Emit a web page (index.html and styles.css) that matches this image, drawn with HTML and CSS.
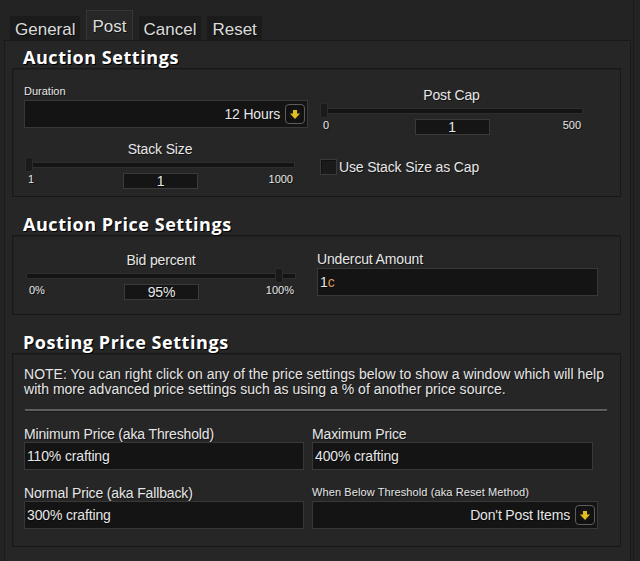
FILE: index.html
```html
<!DOCTYPE html>
<html>
<head>
<meta charset="utf-8">
<link rel="stylesheet" href="styles.css">
</head>
<body>
<div class="window">
  <div class="tabs">
    <div class="tab">General</div>
    <div class="tab active">Post</div>
    <div class="tab">Cancel</div>
    <div class="tab">Reset</div>
  </div>
  <div class="panel">
    <h2 class="heading">Auction Settings</h2>
    <div class="box box-auction">
      <div class="field">
        <div class="label small">Duration</div>
        <div class="dropdown">
          <span class="dd-text">12 Hours</span>
          <span class="dd-btn"><svg width="10" height="9" viewBox="0 0 10 9"><path d="M3 0h4v3.5h3L5 9 0 3.5h3z" fill="#e0c01c"/></svg></span>
        </div>
      </div>
      <div class="slider postcap">
        <div class="slider-label">Post Cap</div>
        <div class="slider-track-wrap"><div class="slider-track"></div><div class="slider-thumb" style="left: calc((100% - 8px) * 0)"></div></div>
        <div class="slider-foot"><span class="slider-min">0</span><span class="slider-value">1</span><span class="slider-max">500</span></div>
      </div>
      <div class="slider stack">
        <div class="slider-label">Stack Size</div>
        <div class="slider-track-wrap"><div class="slider-track"></div><div class="slider-thumb" style="left: calc((100% - 8px) * 0)"></div></div>
        <div class="slider-foot"><span class="slider-min">1</span><span class="slider-value">1</span><span class="slider-max">1000</span></div>
      </div>
      <div class="check">
        <span class="checkbox"></span><span class="check-text">Use Stack Size as Cap</span>
      </div>
    </div>

    <h2 class="heading spaced">Auction Price Settings</h2>
    <div class="box box-price">
      <div class="slider bid">
        <div class="slider-label">Bid percent</div>
        <div class="slider-track-wrap"><div class="slider-track"></div><div class="slider-thumb" style="left: calc((100% - 8px) * 0.95)"></div></div>
        <div class="slider-foot"><span class="slider-min">0%</span><span class="slider-value">95%</span><span class="slider-max">100%</span></div>
      </div>
      <div class="field">
        <div class="label">Undercut Amount</div>
        <div class="input"><span>1</span><span class="copper">c</span></div>
      </div>
    </div>

    <h2 class="heading spaced">Posting Price Settings</h2>
    <div class="box box-posting">
      <p class="note">NOTE: You can right click on any of the price settings below to show a window which will help<br>with more advanced price settings such as using a % of another price source.</p>
      <div class="separator"></div>
      <div class="posting-grid">
        <div class="field">
          <div class="label">Minimum Price (aka Threshold)</div>
          <div class="input">110% crafting</div>
        </div>
        <div class="field">
          <div class="label">Maximum Price</div>
          <div class="input narrow">400% crafting</div>
        </div>
        <div class="field">
          <div class="label">Normal Price (aka Fallback)</div>
          <div class="input">300% crafting</div>
        </div>
        <div class="field">
          <div class="label tiny">When Below Threshold (aka Reset Method)</div>
          <div class="dropdown">
            <span class="dd-text">Don't Post Items</span>
            <span class="dd-btn"><svg width="10" height="9" viewBox="0 0 10 9"><path d="M3 0h4v3.5h3L5 9 0 3.5h3z" fill="#e0c01c"/></svg></span>
          </div>
        </div>
      </div>
    </div>
  </div>
</div>
</body>
</html>
```
FILE: styles.css
```css
html, body {
  margin: 0;
  padding: 0;
  background: #232323;
}
body {
  font-family: "Liberation Sans", Arial, sans-serif;
  color: #e6e6e6;
  font-size: 14px;
  letter-spacing: -0.15px;
  text-shadow: 1px 1px 0 rgba(0, 0, 0, 0.55);
}
.window {
  width: 634px;
  height: 561px;
  overflow: hidden;
  border-right: 1px solid #1a1a1a;
  box-sizing: border-box;
}
.tabs {
  display: flex;
  align-items: flex-end;
  gap: 6px;
  height: 40px;
  padding-left: 10px;
  box-sizing: border-box;
}
.tab {
  font-size: 17px;
  letter-spacing: 0;
  height: 24px;
  line-height: 20px;
  padding: 0 5px;
  display: flex;
  align-items: flex-end;
  background: #1b1b1b;
  color: #dcdcdc;
  box-sizing: border-box;
}
.tab.active {
  height: 30px;
  padding: 0 5px 3px;
  background: #272727;
  border: 1px solid #363636;
  border-bottom: none;
}
.panel {
  margin-left: 4px;
  width: 627px;
  height: 521px;
  box-sizing: border-box;
  border: 1px solid #1a1a1a;
  border-bottom: none;
  background: #262626;
  padding: 5px 9px 0 7px;
}
.heading {
  margin: 0 0 0 11px;
  font-family: "Open Sans", "DejaVu Sans", sans-serif;
  font-weight: 700;
  font-size: 18px;
  line-height: 22px;
  letter-spacing: 0.55px;
  color: #ffffff;
  text-shadow: 1px 1px 0 #000;
}
.heading.spaced {
  margin-top: 16px;
}
.box {
  border: 1px solid #181818;
  box-shadow: inset 1px 1px 0 #202020;
}
.box-auction {
  padding: 15px 0 7px 11px;
  display: grid;
  grid-template-columns: 284px 263px;
  column-gap: 12px;
  row-gap: 6px;
  align-items: start;
}
.box-price {
  padding: 16px 0 14px 12px;
  display: grid;
  grid-template-columns: 270px 281px;
  column-gap: 22px;
  align-items: start;
}
.box-posting {
  padding: 13px 13px 17px 11px;
}
.label {
  font-size: 14px;
  line-height: 15px;
  white-space: nowrap;
}
.label.small {
  font-size: 11px;
  letter-spacing: 0;
}
.label.tiny {
  font-size: 11px;
  line-height: 12px;
  letter-spacing: 0.1px;
  padding-bottom: 3px;
}
.dropdown {
  margin-top: 1px;
  height: 28px;
  box-sizing: border-box;
  background: #141414;
  border: 1px solid #383838;
  display: flex;
  justify-content: flex-end;
  align-items: center;
  padding-right: 2px;
}
.box-posting .dropdown {
  margin-top: 0;
}
.dd-text {
  font-size: 14px;
  margin-right: 5px;
}
.dd-btn {
  width: 20px;
  height: 20px;
  box-sizing: border-box;
  border: 1px solid #5c5c5c;
  border-radius: 4px;
  background: radial-gradient(circle, #1e1e1e 0%, #080808 100%);
  box-shadow: inset 0 0 0 1px #141414;
  display: flex;
  align-items: center;
  justify-content: center;
}
.slider {
  display: flex;
  flex-direction: column;
}
.postcap {
  margin-top: 3px;
}
.stack, .bid {
  margin-left: 1px;
  width: 270px;
}
.slider-label {
  height: 16px;
  line-height: 16px;
  text-align: center;
  font-size: 14px;
}
.slider-track-wrap {
  position: relative;
  height: 16px;
}
.slider-track {
  position: absolute;
  left: 0;
  right: 0;
  top: 5px;
  height: 6px;
  box-sizing: border-box;
  background: #141414;
  border: 1px solid #2e2e2e;
}
.slider-thumb {
  position: absolute;
  top: 0;
  width: 8px;
  height: 15px;
  box-sizing: border-box;
  background: #1a1a1a;
  border: 1px solid #2c2c2c;
  border-radius: 2px;
}
.slider-foot {
  display: grid;
  grid-template-columns: 1fr auto 1fr;
  align-items: start;
  height: 16px;
  padding: 0 2px 0 3px;
}
.slider-min, .slider-max {
  font-size: 11px;
  line-height: 12px;
  letter-spacing: 0;
}
.slider-min {
  justify-self: start;
}
.slider-max {
  justify-self: end;
}
.slider-value {
  width: 75px;
  height: 16px;
  box-sizing: border-box;
  background: #151515;
  border: 1px solid #3a3a3a;
  text-align: center;
  font-size: 14px;
  line-height: 15px;
}
.check {
  margin-top: 18px;
  display: flex;
  align-items: center;
  gap: 2px;
}
.checkbox {
  width: 17px;
  height: 16px;
  box-sizing: border-box;
  background: #1a1a1a;
  border: 1px solid #3a3a3a;
  box-shadow: inset 1px 1px 0 #101010;
}
.check-text {
  font-size: 14px;
  line-height: 16px;
}
.input {
  margin-top: 1px;
  height: 28px;
  box-sizing: border-box;
  background: #141414;
  border: 1px solid #383838;
  padding-left: 2px;
  font-size: 14px;
  line-height: 26px;
  white-space: nowrap;
}
.box-posting .input {
  margin-top: 0;
}
.input.narrow {
  width: 281px;
}
.copper {
  color: #e09a5c;
}
.note {
  margin: 0;
  font-size: 14px;
  line-height: 15px;
  letter-spacing: 0.02px;
  white-space: nowrap;
}
.separator {
  margin: 12px 0 0 1px;
  height: 2px;
  background: #5e5e5e;
  border-bottom: 1px solid #1a1a1a;
}
.posting-grid {
  margin-top: 15px;
  display: grid;
  grid-template-columns: 280px 286px;
  column-gap: 8px;
  row-gap: 16px;
}
```
